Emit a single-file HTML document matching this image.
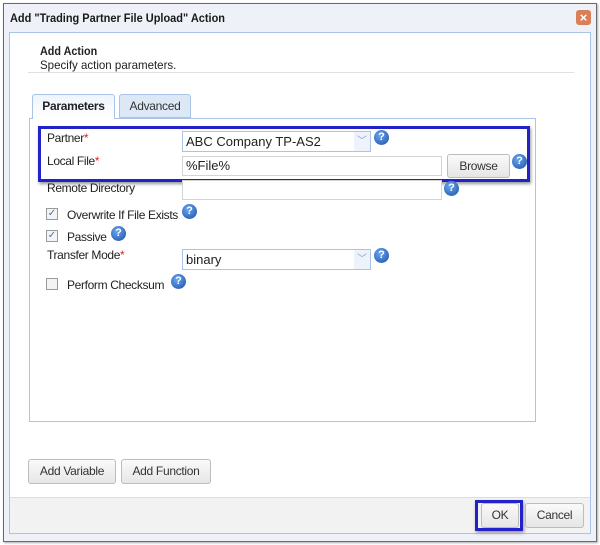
<!DOCTYPE html>
<html><head><style>
*{box-sizing:border-box;margin:0;padding:0}
body{width:600px;height:545px;background:#fff;font-family:"Liberation Sans",Arial,sans-serif;font-size:12px;color:#222;position:relative;overflow:hidden}
.a{position:absolute}
.outer{left:3px;top:3px;width:594px;height:539px;border:1px solid #6a6a6a;background:#eef2f8;box-shadow:1px 1px 2px #aaa}
.inner{left:9px;top:32px;width:582px;height:502px;border:1px solid #a9c4e8;background:#fff}
.foot{left:10px;top:497px;width:580px;height:36px;background:#f2f2f2;border-top:1px solid #dcdcdc}
.btn{border:1px solid #bdbdbd;border-radius:3px;background:linear-gradient(#fafafa,#e6e6e6);font-size:12px;text-align:center;color:#333;letter-spacing:-0.3px}
.inp{border:1px solid #d4d4d4;background:#fff;font-size:13px;padding-left:3px}
.sel{border:1px solid #a9c4e8}
.arr{position:absolute;right:0;top:0;width:16px;height:100%;background:#eef3fb;color:#7aa1d4;font-size:10px;text-align:center}
.q{width:15px;height:15px;border-radius:50%;background:radial-gradient(circle at 40% 35%,#6aa6ec,#1c4fa8);color:#fff;font-weight:bold;font-size:11px;text-align:center;line-height:15px}
.cb{width:12px;height:12px;border:1px solid #9a9a9a;background:#f4f4f4;font-size:10px;line-height:10px;text-align:center;color:#4a6fa8}
.lbl{font-size:12px;color:#222;letter-spacing:-0.35px}
.st{color:#d22}
.sx{transform-origin:0 0;white-space:nowrap}
</style></head><body>
<div class="a outer"></div>
<div class="a sx" style="left:10px;top:11px;font-size:12px;font-weight:bold;color:#1a1a1a;transform:scaleX(0.915)">Add "Trading Partner File Upload" Action</div>
<div class="a" style="left:576px;top:10px;width:15px;height:15px;border-radius:3px;background:#d8805a;color:#fff;font-weight:bold;font-size:13px;line-height:15px;text-align:center">×</div>
<div class="a inner"></div>
<div class="a foot"></div>
<div class="a sx" style="left:40px;top:44px;font-weight:bold;font-size:12px;transform:scaleX(0.9)">Add Action</div>
<div class="a sx" style="left:40px;top:58px;font-size:12px;transform:scaleX(0.96)">Specify action parameters.</div>
<div class="a" style="left:28px;top:72px;width:546px;height:1px;background:#e0e0e0"></div>
<div class="a" style="left:29px;top:118px;width:507px;height:304px;border:1px solid #a9c4e8"></div>
<div class="a" style="left:32px;top:94px;width:83px;height:25px;border:1px solid #a9c4e8;border-bottom:none;border-radius:3px 3px 0 0;background:linear-gradient(#eef4fc,#fff);font-weight:bold;text-align:center;line-height:23px;letter-spacing:-0.3px">Parameters</div>
<div class="a" style="left:119px;top:94px;width:72px;height:24px;border:1px solid #a9c4e8;border-radius:3px 3px 0 0;background:#dde8f7;text-align:center;line-height:23px;color:#333;letter-spacing:-0.3px">Advanced</div>

<div class="a" style="left:38px;top:126px;width:492px;height:56px;border:3px solid #2222c8;box-shadow:1px 2px 3px #999"></div>
<div class="a lbl" style="left:47px;top:131px">Partner<span class="st">*</span></div>
<div class="a inp sel" style="left:182px;top:131px;width:189px;height:21px;line-height:19px">ABC Company TP-AS2<div class="arr">﹀</div></div>
<div class="a q" style="left:374px;top:130px">?</div>
<div class="a lbl" style="left:47px;top:154px">Local File<span class="st">*</span></div>
<div class="a inp" style="left:182px;top:156px;width:260px;height:20px;line-height:18px">%File%</div>
<div class="a btn" style="left:447px;top:154px;width:63px;height:24px;line-height:22px">Browse</div>
<div class="a q" style="left:512px;top:154px">?</div>
<div class="a lbl" style="left:47px;top:181px">Remote Directory</div>
<div class="a inp" style="left:182px;top:180px;width:260px;height:20px"></div>
<div class="a q" style="left:444px;top:181px">?</div>
<div class="a cb" style="left:46px;top:208px">✓</div>
<div class="a lbl" style="left:67px;top:208px">Overwrite If File Exists</div>
<div class="a q" style="left:182px;top:204px">?</div>
<div class="a cb" style="left:46px;top:230px">✓</div>
<div class="a lbl" style="left:67px;top:230px">Passive</div>
<div class="a q" style="left:111px;top:226px">?</div>
<div class="a lbl" style="left:47px;top:248px">Transfer Mode<span class="st">*</span></div>
<div class="a inp sel" style="left:182px;top:249px;width:189px;height:21px;line-height:19px">binary<div class="arr">﹀</div></div>
<div class="a q" style="left:374px;top:248px">?</div>
<div class="a cb" style="left:46px;top:278px"></div>
<div class="a lbl" style="left:67px;top:278px">Perform Checksum</div>
<div class="a q" style="left:171px;top:274px">?</div>

<div class="a btn" style="left:28px;top:459px;width:88px;height:25px;line-height:23px">Add Variable</div>
<div class="a btn" style="left:121px;top:459px;width:90px;height:25px;line-height:23px">Add Function</div>
<div class="a" style="left:475px;top:500px;width:48px;height:31px;border:3px solid #2222c8;box-shadow:1px 2px 3px #999"></div>
<div class="a btn" style="left:481px;top:503px;width:38px;height:25px;line-height:23px">OK</div>
<div class="a btn" style="left:525px;top:503px;width:59px;height:25px;line-height:23px">Cancel</div>
</body></html>
